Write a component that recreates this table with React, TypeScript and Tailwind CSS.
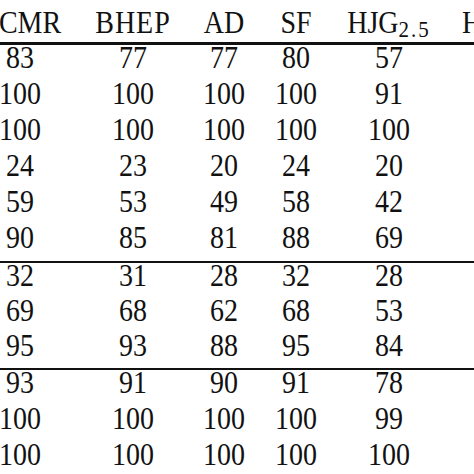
import React from "react";

const cols = "grid grid-cols-[120px_106px_76px_68px_118px_90px]";

function Cell({ children, extra = "" }: { children?: React.ReactNode; extra?: string }) {
  return (
    <div className={`flex justify-center ${extra}`}>
      <span className="inline-block whitespace-nowrap scale-y-110 leading-[26px] text-[28px]">{children}</span>
    </div>
  );
}

function Row({ values, h = "h-[36px]" }: { values: string[]; h?: string }) {
  return (
    <div className={`${cols} ${h} items-start`}>
      {values.map((v, i) => (
        <Cell key={i}>{v}</Cell>
      ))}
      <Cell />
    </div>
  );
}

const block1 = [
  ["83", "77", "77", "80", "57"],
  ["100", "100", "100", "100", "91"],
  ["100", "100", "100", "100", "100"],
  ["24", "23", "20", "24", "20"],
  ["59", "53", "49", "58", "42"],
  ["90", "85", "81", "88", "69"],
];
const block2 = [
  ["32", "31", "28", "32", "28"],
  ["69", "68", "62", "68", "53"],
  ["95", "93", "88", "95", "84"],
];
const block3 = [
  ["93", "91", "90", "91", "78"],
  ["100", "100", "100", "100", "99"],
  ["100", "100", "100", "100", "100"],
];

export default function App() {
  return (
    <div
      className="w-[474px] h-[474px] overflow-hidden bg-white text-[#111]"
      style={{ fontFamily: '"Liberation Serif", "Times New Roman", serif' }}
    >
      <div className="ml-[-40px] w-[600px]">
        <div className={`${cols} h-[42px] pt-[10px] items-start`}>
          <Cell extra="pl-[20px]">CMR</Cell>
          <Cell><span className="tracking-[1px]">BHEP</span></Cell>
          <Cell>AD</Cell>
          <Cell>SF</Cell>
          <Cell>
            HJG<sub className="text-[21px] tracking-[2px] relative top-[4px] align-baseline">2.5</sub>
          </Cell>
          <Cell>
            HJG<sub className="text-[21px] relative top-[4px] align-baseline">5</sub>
          </Cell>
        </div>
        <div className="h-[3px] bg-[#111]" />
        {block1.map((r, i) => (
          <Row key={i} values={r} />
        ))}
        <div className="h-[2px] bg-[#111]" />
        {block2.map((r, i) => (
          <Row key={i} values={r} h="h-[35px]" />
        ))}
        <div className="h-[2px] bg-[#111]" />
        {block3.map((r, i) => (
          <Row key={i} values={r} />
        ))}
      </div>
    </div>
  );
}
